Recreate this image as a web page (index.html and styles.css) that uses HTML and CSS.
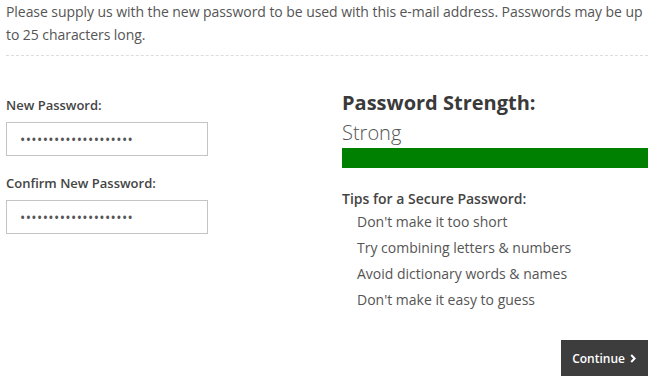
FILE: index.html
```html
<!DOCTYPE html>
<html lang="en">
<head>
    <meta charset="UTF-8">
    <title>Change Password</title>
    <link rel="stylesheet" href="styles.css">
</head>
<body>
    <div class="container">
        <p class="intro">Please supply us with the new password to be used with this e-mail address. Passwords may be up to 25 characters long.</p>

        <form class="pw-form" onsubmit="return false;">
            <div class="fields">
                <div class="form-group">
                    <label for="newPassword">New Password:</label>
                    <input type="password" id="newPassword" value="aaaaaaaaaaaaaaaaaaaa">
                </div>
                <div class="form-group">
                    <label for="confirmPassword">Confirm New Password:</label>
                    <input type="password" id="confirmPassword" value="aaaaaaaaaaaaaaaaaaaa">
                </div>
            </div>

            <div class="strength">
                <h2>Password Strength:</h2>
                <div class="strength-label">Strong</div>
                <div class="strength-bar"><div class="strength-fill" style="width: 100%;"></div></div>

                <h3>Tips for a Secure Password:</h3>
                <ul class="tips">
                    <li>Don't make it too short</li>
                    <li>Try combining letters &amp; numbers</li>
                    <li>Avoid dictionary words &amp; names</li>
                    <li>Don't make it easy to guess</li>
                </ul>
            </div>

            <div class="actions">
                <button type="submit" class="continue">Continue
                    <svg width="6" height="9" viewBox="0 0 6 9"><path d="M1.2 1 L4.6 4.5 L1.2 8" fill="none" stroke="#fff" stroke-width="2"/></svg>
                </button>
            </div>
        </form>
    </div>
</body>
</html>
```

FILE: styles.css
```css
body {
    margin: 0;
    font-family: "Open Sans", Arial, sans-serif;
    color: #555;
    background: #fff;
}
.container {
    width: 642px;
    margin-left: 6px;
}
.intro {
    margin: 0;
    font-size: 14px;
    line-height: 23px;
    letter-spacing: -0.06px;
    padding-bottom: 9px;
    border-bottom: 1px dashed #ddd;
}
.pw-form {
    display: grid;
    grid-template-columns: 336px 1fr;
}
.fields {
    padding-top: 40px;
}
.form-group {
    margin-bottom: 18px;
}
label {
    display: block;
    font-size: 13px;
    font-weight: 600;
    line-height: 18px;
    color: #444;
    margin-bottom: 8px;
}
input {
    width: 202px;
    height: 34px;
    box-sizing: border-box;
    border: 1px solid #c4c4c4;
    padding: 0 13px;
    font-family: "Open Sans", Arial, sans-serif;
    font-size: 14px;
    letter-spacing: 0.4px;
    color: #555;
    outline: none;
}
.strength {
    padding-top: 32px;
}
h2 {
    margin: 0;
    font-size: 20px;
    line-height: 30px;
    font-weight: bold;
    color: #3a3a3a;
}
.strength-label {
    font-size: 20px;
    line-height: 30px;
    font-weight: 300;
    color: #555;
}
.strength-bar {
    height: 20px;
    background: #eee;
}
.strength-fill {
    height: 100%;
    background: #008000;
}
h3 {
    margin: 21px 0 0;
    font-size: 14px;
    line-height: 20px;
    font-weight: 600;
    color: #444;
}
.tips {
    list-style: none;
    margin: 0;
    padding: 0 0 0 15px;
}
.tips li {
    font-size: 14px;
    line-height: 26px;
}
.actions {
    grid-column: 1 / 3;
    display: flex;
    justify-content: flex-end;
    margin-top: 27px;
}
.continue {
    display: flex;
    align-items: center;
    gap: 5px;
    height: 36px;
    padding: 0 12px 0 11px;
    border: none;
    background: #3d3d3d;
    color: #fff;
    font-family: "Open Sans", Arial, sans-serif;
    font-size: 12px;
    font-weight: 600;
    cursor: pointer;
}
```
